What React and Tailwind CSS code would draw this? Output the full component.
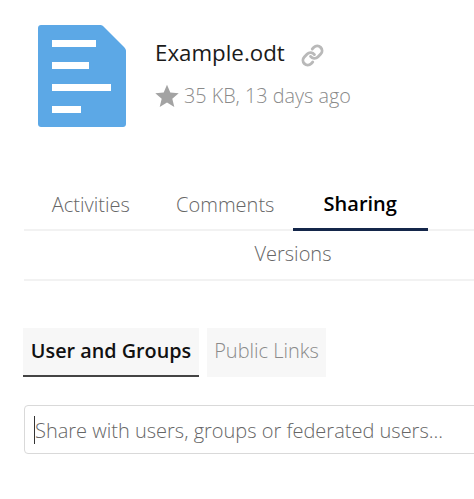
import React from 'react';
import { Link } from 'lucide-react';

const font = { fontFamily: '"Open Sans", sans-serif' };

const FileIcon = () => (
  <svg width="88" height="102" viewBox="0 0 88 102" className="shrink-0">
    <path d="M3 0H62C63.5 0 64.5 .5 65.5 1.5L86 22C87.2 23.2 88 24.5 88 26V99C88 100.7 86.7 102 85 102H3C1.3 102 0 100.7 0 99V3C0 1.3 1.3 0 3 0Z" fill="#5ca8e6" />
    <rect x="14" y="15" width="44" height="7" fill="#fff" />
    <rect x="14" y="37" width="37" height="7" fill="#fff" />
    <rect x="14" y="59" width="59" height="7" fill="#fff" />
    <rect x="14" y="81" width="29" height="7" fill="#fff" />
  </svg>
);

const Star = () => (
  <svg width="24" height="24" viewBox="0 0 24 24" className="shrink-0">
    <path d="M12 .8l3.3 7.7 8.4.7-6.4 5.5 2 8.2L12 18.5l-7.3 4.4 2-8.2L.3 9.2l8.4-.7z" fill="#a3a3a3" />
  </svg>
);

const Tab = ({ label, active, height }) => (
  <div className={`w-[134.5px] ${height} flex items-center justify-center text-[20px] ${active ? 'font-semibold text-black border-b-[3px] border-[#14264a]' : 'font-light text-[#666]'}`}>
    <span>{label}</span>
  </div>
);

export default function App() {
  return (
    <div className="w-[474px] h-[499px] overflow-hidden bg-white" style={font}>
      <div className="flex items-center pt-[25px] pl-[38px]">
        <FileIcon />
        <div className="ml-[29px] mb-[5px]">
          <div className="flex items-center h-[34px]">
            <span className="text-[22.3px] font-normal text-[#1a1a1a]">Example.odt</span>
            <Link size={23} strokeWidth={3} className="ml-[16px] mt-[5px] text-[#b9b9b9]" />
          </div>
          <div className="flex items-center mt-[11px]">
            <Star />
            <span className="ml-[5px] text-[19.8px] font-light text-[#8a8a8a]">35 KB, 13 days ago</span>
          </div>
        </div>
      </div>

      <div className="ml-6 mt-[53px] w-[538px]">
        <div className="flex h-[51px] border-b-2 border-[#f2f2f2]">
          <Tab label="Activities" height="h-[49px] pr-[1px]" />
          <Tab label="Comments" height="h-[49px] pr-[1px]" />
          <Tab label="Sharing" height="h-[51px] pb-[1px]" active />
        </div>
        <div className="flex justify-center h-[50px] border-b-2 border-[#f2f2f2]">
          <Tab label="Versions" height="h-[46px]" />
        </div>
      </div>

      <div className="flex gap-[8px] ml-[23px] mt-[47px]">
        <div className="w-[176px] h-[49px] pb-[2px] flex items-center justify-center bg-[#f7f7f7] border-b-2 border-[#444] text-[19.8px] font-semibold text-[#111]">
          User and Groups
        </div>
        <div className="w-[119px] h-[49px] pb-[4px] flex items-center justify-center bg-[#f7f7f7] text-[20px] font-light text-[#8a8a8a]">
          Public Links
        </div>
      </div>

      <div className="ml-6 mt-[28px] w-[520px] h-[49px] flex items-center rounded-[4px] border border-[#d9d9d9] pl-[9px]">
        <span className="w-[1px] h-[28px] bg-[#333] shrink-0" />
        <span className="pt-[2px] text-[20px] font-light text-[#666] whitespace-nowrap">Share with users, groups or federated users...</span>
      </div>
    </div>
  );
}
